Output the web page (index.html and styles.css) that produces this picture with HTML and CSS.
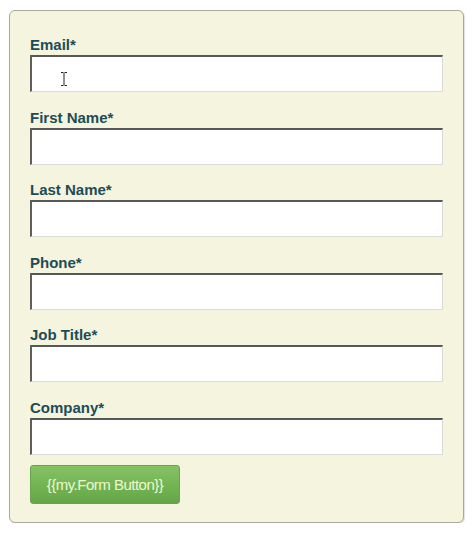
FILE: index.html
```html
<!DOCTYPE html>
<html>
<head>
<meta charset="utf-8">
<link rel="stylesheet" href="styles.css">
</head>
<body>
<form class="card">
  <div class="field">
    <label class="label">Email*</label>
    <div class="input">
      <svg class="ibeam" width="8" height="14" viewBox="0 0 8 14"><path d="M1 0.5h2.5M4.5 0.5H7M4 1v12M1 13.5h2.5M4.5 13.5H7" stroke="#222" stroke-width="1" fill="none"/></svg>
    </div>
  </div>
  <div class="field">
    <label class="label">First Name*</label>
    <div class="input"></div>
  </div>
  <div class="field">
    <label class="label">Last Name*</label>
    <div class="input"></div>
  </div>
  <div class="field">
    <label class="label">Phone*</label>
    <div class="input"></div>
  </div>
  <div class="field">
    <label class="label">Job Title*</label>
    <div class="input"></div>
  </div>
  <div class="field">
    <label class="label">Company*</label>
    <div class="input"></div>
  </div>
  <button type="button" class="btn">{{my.Form Button}}</button>
</form>
</body>
</html>
```
FILE: styles.css
```css
html, body {
  margin: 0;
  padding: 0;
  background: #ffffff;
}
body {
  padding: 10px 0 0 9px;
  font-family: "Liberation Sans", Arial, sans-serif;
}
.card {
  box-sizing: border-box;
  width: 455px;
  height: 513px;
  background: #f5f4de;
  border: 1px solid #a9a99c;
  border-radius: 6px;
  box-shadow: 1px 1px 1px rgba(0,0,0,0.12);
  padding: 26px 20px 18px 20px;
  display: flex;
  flex-direction: column;
}
.field {
  display: flex;
  flex-direction: column;
  flex-shrink: 0;
  margin-bottom: 17.6px;
}
.field:nth-of-type(6) {
  margin-bottom: 10px;
}
.label {
  font-size: 15px;
  font-weight: bold;
  line-height: 16px;
  color: #1d4c57;
  margin-bottom: 2px;
}
.input {
  position: relative;
  box-sizing: border-box;
  width: 413px;
  height: 37px;
  background: #ffffff;
  border-top: 2px solid #585858;
  border-left: 2px solid #5e5e5e;
  border-right: 1px solid #d9d9d5;
  border-bottom: 1px solid #dcdcd6;
}
.ibeam {
  position: absolute;
  left: 28px;
  top: 15px;
}
.btn {
  flex-shrink: 0;
  box-sizing: border-box;
  width: 150px;
  height: 39px;
  border: 1px solid #6aa34d;
  border-radius: 3px;
  background: linear-gradient(#86c264, #64a646);
  color: #eaf9d2;
  font-family: "Liberation Sans", Arial, sans-serif;
  font-size: 15px;
  letter-spacing: -0.5px;
  padding: 0;
  text-align: center;
  cursor: pointer;
}
```
